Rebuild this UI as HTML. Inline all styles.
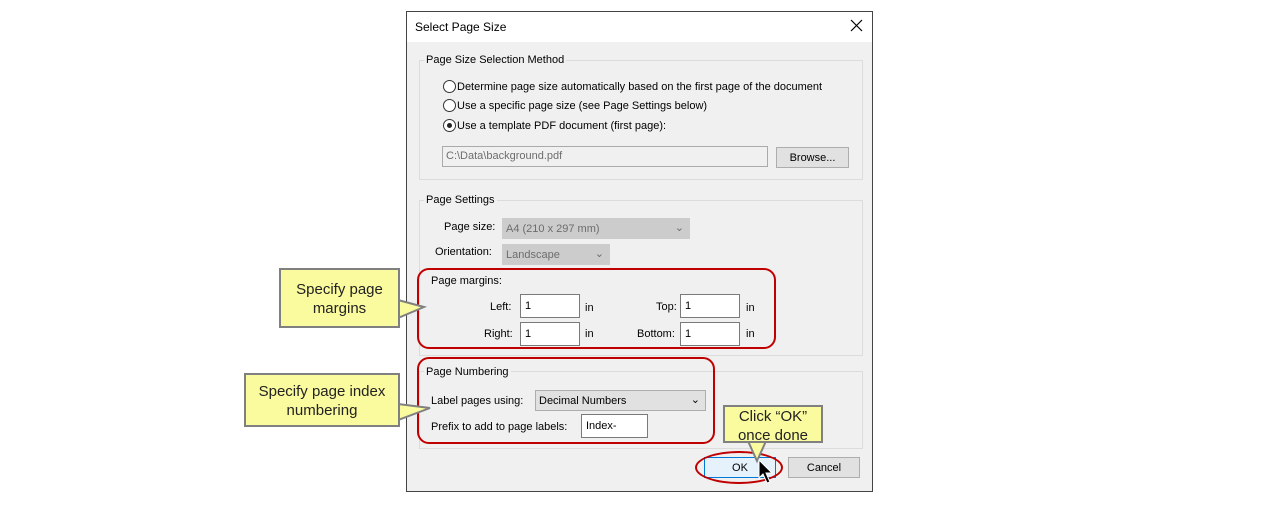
<!DOCTYPE html>
<html><head><style>
body{margin:0;width:1280px;height:505px;background:#fff;position:relative;overflow:hidden;font-family:"Liberation Sans",sans-serif;font-size:11px;color:#000}
.a{position:absolute}
.grp{position:absolute;border:1px solid #dcdcdc}
.lg{position:absolute;background:#f0f0f0;padding:0 2px;font-size:11px;line-height:13px}
.t{position:absolute;font-size:11px;line-height:13px;white-space:nowrap}
.r{position:absolute;width:11px;height:11px;border:1px solid #333;border-radius:50%;background:#fff}
.in{position:absolute;background:#fff;border:1px solid #7a7a7a;box-sizing:border-box;padding:5px 4px;font-size:11px;line-height:13px}
.cb{position:absolute;background:#ccc;border:1px solid #ccc;box-sizing:border-box;color:#6d6d6d;padding:4px 3px;font-size:11px;line-height:13px}
.btn{position:absolute;background:#e1e1e1;border:1px solid #adadad;box-sizing:border-box;text-align:center;font-size:11px}
.red{position:absolute;border:2.5px solid #c00000;border-radius:12px;box-sizing:border-box}
.co{position:absolute;background:#fafa9e;border:2px solid #808080;box-sizing:border-box;text-align:center;font-size:15px;line-height:19px;color:#222}
</style></head><body>
<div class="a" style="left:406px;top:11px;width:465px;height:479px;border:1px solid #444;background:#f0f0f0"></div>
<div class="a" style="left:407px;top:12px;width:465px;height:30px;background:#fff"></div>
<div class="t" style="left:415px;top:21px;font-size:12px">Select Page Size</div>
<svg class="a" style="left:850px;top:19px" width="13" height="13"><path d="M1 1L12 12M12 1L1 12" stroke="#000" stroke-width="1.2"/></svg>

<div class="grp" style="left:419px;top:60px;width:442px;height:118px"></div>
<div class="lg" style="left:424px;top:54px">Page Size Selection Method</div>
<div class="r" style="left:443px;top:80px"></div><div class="t" style="left:457px;top:81px">Determine page size automatically based on the first page of the document</div>
<div class="r" style="left:443px;top:99px"></div><div class="t" style="left:457px;top:100px">Use a specific page size (see Page Settings below)</div>
<div class="r" style="left:443px;top:119px"></div><div class="a" style="left:447px;top:123px;width:5px;height:5px;border-radius:50%;background:#222"></div><div class="t" style="left:457px;top:120px">Use a template PDF document (first page):</div>
<div class="in" style="left:442px;top:146px;width:326px;height:21px;padding:3px 3px;background:#f0f0f0;border-color:#aaa;color:#6d6d6d">C:\Data\background.pdf</div>
<div class="btn" style="left:776px;top:147px;width:73px;height:21px;line-height:21px">Browse...</div>

<div class="grp" style="left:419px;top:200px;width:442px;height:154px"></div>
<div class="lg" style="left:424px;top:194px">Page Settings</div>
<div class="t" style="left:444px;top:221px">Page size:</div>
<div class="cb" style="left:502px;top:218px;width:188px;height:21px">A4 (210 x 297 mm)<span style="position:absolute;right:5px;top:3px">&#8964;</span></div>
<div class="t" style="left:435px;top:246px">Orientation:</div>
<div class="cb" style="left:502px;top:244px;width:108px;height:21px">Landscape<span style="position:absolute;right:5px;top:3px">&#8964;</span></div>
<div class="t" style="left:431px;top:275px">Page margins:</div>
<div class="t" style="left:490px;top:301px">Left:</div><div class="in" style="left:520px;top:294px;width:60px;height:24px">1</div><div class="t" style="left:585px;top:302px">in</div>
<div class="t" style="left:656px;top:301px">Top:</div><div class="in" style="left:680px;top:294px;width:60px;height:24px">1</div><div class="t" style="left:746px;top:302px">in</div>
<div class="t" style="left:484px;top:328px">Right:</div><div class="in" style="left:520px;top:322px;width:60px;height:24px">1</div><div class="t" style="left:585px;top:328px">in</div>
<div class="t" style="left:637px;top:328px">Bottom:</div><div class="in" style="left:680px;top:322px;width:60px;height:24px">1</div><div class="t" style="left:746px;top:328px">in</div>
<div class="red" style="left:417px;top:268px;width:359px;height:81px"></div>

<div class="grp" style="left:419px;top:371px;width:442px;height:76px"></div>
<div class="lg" style="left:424px;top:366px">Page Numbering</div>
<div class="t" style="left:431px;top:395px">Label pages using:</div>
<div class="cb" style="left:535px;top:390px;width:171px;height:21px;background:#e1e1e1;border-color:#adadad;color:#000">Decimal Numbers<span style="position:absolute;right:5px;top:3px">&#8964;</span></div>
<div class="t" style="left:431px;top:421px">Prefix to add to page labels:</div>
<div class="in" style="left:581px;top:414px;width:67px;height:24px">Index-</div>
<div class="red" style="left:417px;top:357px;width:298px;height:87px"></div>

<div class="btn" style="left:704px;top:457px;width:72px;height:21px;line-height:21px;background:#e5f1fb;border-color:#0078d7">OK</div>
<div class="btn" style="left:788px;top:457px;width:72px;height:21px;line-height:21px">Cancel</div>
<div class="a" style="left:695px;top:451px;width:88px;height:33px;border:2.5px solid #c00000;border-radius:50%;box-sizing:border-box"></div>

<svg class="a" style="left:0;top:0" width="1280" height="505">
<polygon points="398,300 424,307 398,318" fill="#fafa9e" stroke="#808080" stroke-width="2"/>
<polygon points="398,404 430,408 398,420" fill="#fafa9e" stroke="#808080" stroke-width="2"/>
<polygon points="748,441 757,461 766,441" fill="#fafa9e" stroke="#808080" stroke-width="2"/>
<path d="M759,460 L759,478 L763,474 L767,483 L770,482 L766,473 L772,473 Z" fill="#000" stroke="#fff" stroke-width="1"/>
</svg>
<div class="co" style="left:279px;top:268px;width:121px;height:60px;padding-top:10px">Specify page<br>margins</div>
<div class="co" style="left:244px;top:373px;width:156px;height:54px;padding-top:7px">Specify page index<br>numbering</div>
<div class="co" style="left:723px;top:405px;width:100px;height:38px;padding-top:0">Click “OK”<br>once done</div>
</body></html>
